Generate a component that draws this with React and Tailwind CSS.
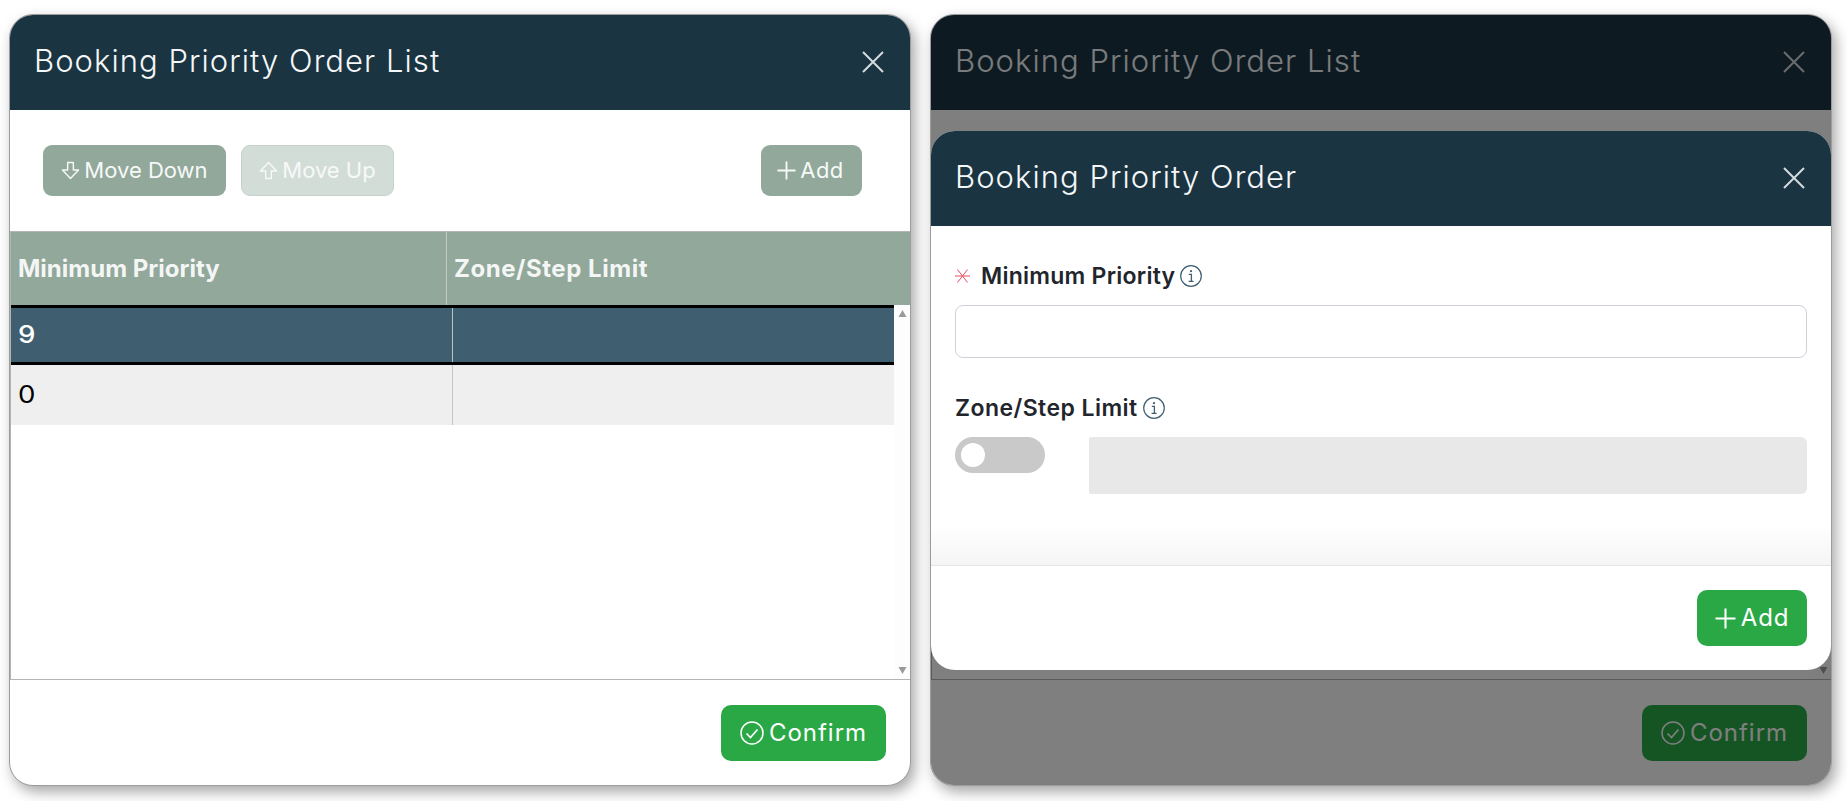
import React from "react";

const X = ({ className }) => (
  <svg viewBox="0 0 22 22" className={className} fill="none" stroke="#d5dbde" strokeWidth="2">
    <path d="M1 1 L21 21 M21 1 L1 21" />
  </svg>
);
const ArrowDown = ({ className }) => (
  <svg viewBox="0 0 20 20" className={className} fill="none" stroke="currentColor" strokeWidth="1.5" strokeLinejoin="round">
    <path d="M7 1.5 H13 V9.5 H18.5 L10 18.5 L1.5 9.5 H7 Z" />
  </svg>
);
const ArrowUp = ({ className }) => (
  <svg viewBox="0 0 20 20" className={className} fill="none" stroke="currentColor" strokeWidth="1.5" strokeLinejoin="round">
    <path d="M7 18.5 H13 V10.5 H18.5 L10 1.5 L1.5 10.5 H7 Z" />
  </svg>
);
const Plus = ({ className }) => (
  <svg viewBox="0 0 20 20" className={className} fill="none" stroke="currentColor" strokeWidth="2">
    <path d="M10 0.5 V19.5 M0.5 10 H19.5" />
  </svg>
);
const CheckCircle = ({ className }) => (
  <svg viewBox="0 0 24 24" className={className} fill="none" stroke="currentColor" strokeWidth="1.5">
    <circle cx="12" cy="12" r="11" />
    <path d="M6.5 12.5 L10.5 16.5 L17.5 8.5" strokeWidth="1.7" />
  </svg>
);
const Info = () => (
  <svg viewBox="0 0 22 22" className="w-[22px] h-[22px] shrink-0" fill="none" stroke="#3f5f70">
    <circle cx="11" cy="11" r="10.3" strokeWidth="1.2" />
    <circle cx="11" cy="6.2" r="1.1" fill="#3f5f70" stroke="none" />
    <path d="M8.8 9.4 H11.4 V16.2 M8.6 16.4 H13.6" strokeWidth="1.3" />
  </svg>
);
const Asterisk = () => (
  <svg viewBox="0 0 15 14" className="w-[15px] h-[14px] shrink-0" fill="none" stroke="#ea4a60" strokeWidth="1">
    <path d="M0 7 H15 M2.5 0.5 L12.5 13.5 M12.5 0.5 L2.5 13.5" />
  </svg>
);
const Tri = ({ down }) => (
  <svg viewBox="0 0 8 7" className="w-[9px] h-[7px]" fill="#9a9a9a">
    <path d={down ? "M0 0 H8 L4 7 Z" : "M4 0 L8 7 H0 Z"} />
  </svg>
);

const Header = ({ title }) => (
  <div className="h-[95px] shrink-0 bg-[#1a3442] flex items-center justify-between pl-[24px] pr-[26px]">
    <h2 className="text-[31px] font-light text-[#f5f7f8] tracking-[1.05px] pb-[2px]">{title}</h2>
    <X className="w-[22px] h-[22px] mb-[2px]" />
  </div>
);

const tool = "h-[51px] rounded-[9px] flex items-center justify-center gap-[4px] text-[22px] text-[#f7f9f8]";

function ListDialog() {
  return (
    <div className="flex flex-col h-full">
      <Header title="Booking Priority Order List" />
      <div className="h-[121px] shrink-0 flex items-center pl-[33px] pr-[48px]">
        <button className={`${tool} w-[183px] bg-[#91a89a]`}>
          <ArrowDown className="w-[19px] h-[19px]" />
          Move Down
        </button>
        <button className={`${tool} w-[153px] ml-[15px] bg-[#d3ddd7] border border-[#c5d1ca]`}>
          <ArrowUp className="w-[19px] h-[19px]" />
          Move Up
        </button>
        <button className={`${tool} w-[101px] ml-auto bg-[#91a89a] tracking-[0.4px] pr-[2px]`}>
          <Plus className="w-[19px] h-[19px]" />
          Add
        </button>
      </div>
      <div className="h-[449px] shrink-0 flex flex-col border-y border-l border-[#b4b4b4]">
        <div className="h-[73px] shrink-0 grid grid-cols-[436px_1fr] bg-[#91a89a] text-[24px] font-bold text-[#f4f6f5]">
          <div className="flex items-center pl-[7px] border-r border-[#c0ccc5]">Minimum Priority</div>
          <div className="flex items-center pl-[7px] tracking-[0.55px]">Zone/Step Limit</div>
        </div>
        <div className="flex-1 flex min-h-0">
          <div className="flex-1 flex flex-col">
            <div className="h-[60px] box-border border-y-[3px] border-black bg-[#3f5f70] grid grid-cols-[442px_1fr] text-white text-[24px] font-medium">
              <div className="flex items-center pl-[7px] border-r border-[#b9c4ca]">
                <span className="inline-block scale-x-[1.15] origin-left">9</span>
              </div>
              <div />
            </div>
            <div className="h-[60px] bg-[#efefef] grid grid-cols-[442px_1fr] text-black text-[24px]">
              <div className="flex items-center pl-[7px] border-r border-[#c4c4c4]">
                <span className="inline-block scale-x-[1.15] origin-left">0</span>
              </div>
              <div />
            </div>
          </div>
          <div className="w-[16px] shrink-0 flex flex-col items-center justify-between pt-[5px] pb-[5px] bg-[#fdfdfd]">
            <Tri />
            <Tri down />
          </div>
        </div>
      </div>
      <div className="flex-1 flex items-center justify-end pr-[24px]">
        <button className="w-[165px] h-[56px] rounded-[10px] bg-[#2aa846] text-white text-[24px] tracking-[1px] flex items-center justify-center gap-[5px]">
          <CheckCircle className="w-[24px] h-[24px]" />
          Confirm
        </button>
      </div>
    </div>
  );
}

function FormDialog() {
  return (
    <div className="absolute inset-x-0 top-[116px] h-[539px] rounded-3xl bg-white flex flex-col overflow-hidden">
      <Header title="Booking Priority Order" />
      <div className="flex-1 flex flex-col min-h-0">
        <div className="px-[24px] pt-[35px]">
          <div className="h-[30px] flex items-center font-semibold text-[#22252b] text-[23px] tracking-[0.25px]">
            <Asterisk />
            <span className="ml-[11px] mr-[5px]">Minimum Priority</span>
            <Info />
          </div>
          <input className="mt-[14px] block w-full h-[53px] rounded-[8px] border border-[#cdd1d8] bg-white" />
          <div className="mt-[35px] h-[30px] flex items-center font-semibold text-[#22252b] text-[23px] tracking-[0.45px]">
            <span className="mr-[5px] pt-[1px]">Zone/Step Limit</span>
            <Info />
          </div>
          <div className="mt-[14px] flex items-start">
            <div className="w-[90px] h-[36px] rounded-full bg-[#c9c9c9] flex items-center pl-[6px]">
              <div className="w-[24px] h-[24px] rounded-full bg-white" />
            </div>
            <div className="ml-[44px] flex-1 h-[57px] rounded-r-[6px] rounded-l-[2px] bg-[#e8e8e8]" />
          </div>
        </div>
        <div className="mt-auto h-[40px] bg-gradient-to-b from-white to-[#f5f5f5]" />
      </div>
      <div className="h-[105px] shrink-0 border-t border-[#e4e4e4] flex items-center justify-end pr-[24px]">
        <button className="w-[110px] h-[56px] rounded-[10px] bg-[#2aa846] text-white text-[24px] tracking-[0.8px] flex items-center justify-center gap-[5px]">
          <Plus className="w-[21px] h-[21px]" />
          Add
        </button>
      </div>
    </div>
  );
}

const frame = "relative w-[902px] h-[772px] bg-white rounded-3xl border border-[#9c9c9c] shadow-[4px_6px_14px_rgba(0,0,0,0.35)] overflow-hidden";

export default function App() {
  return (
    <div className="w-[1847px] h-[801px] bg-white font-['Inter',sans-serif] flex gap-[19px] pl-[9px] pt-[14px] overflow-hidden">
      <section className={frame}>
        <ListDialog />
      </section>
      <section className={frame}>
        <ListDialog />
        <div className="absolute inset-0 bg-black/50" />
        <FormDialog />
      </section>
    </div>
  );
}
